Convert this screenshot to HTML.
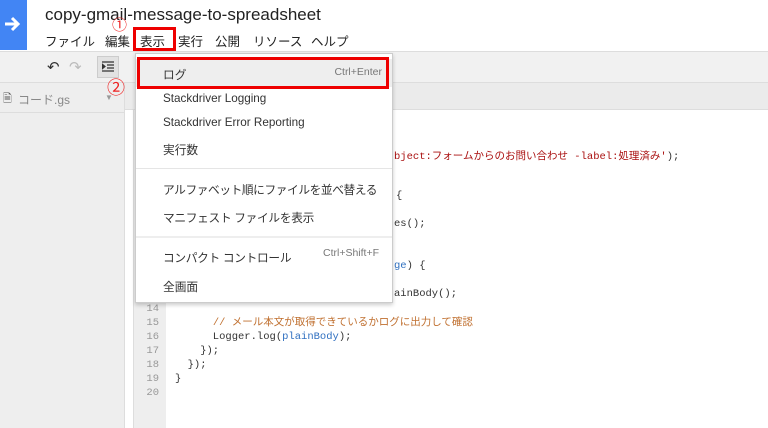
<!DOCTYPE html>
<html><head><meta charset="utf-8"><style>
*{margin:0;padding:0;box-sizing:border-box}
body{width:768px;height:428px;overflow:hidden;background:#fff;position:relative;font-family:"Liberation Sans","Noto Sans CJK JP",sans-serif}
.a{position:absolute}
.mono{font-family:"Liberation Mono","Noto Sans CJK JP",monospace;font-size:10.5px;white-space:pre}
.mi{position:absolute;left:27px;font-size:11.7px;color:#333;white-space:nowrap}
.sc{position:absolute;font-size:10.5px;color:#777}
</style></head><body>
<div class="a" style="left:0;top:0;width:27px;height:50px;background:#4285f4"></div>
<svg class="a" style="left:3px;top:14px" width="20" height="20" viewBox="0 0 20 20"><path d="M2 10h13M9 4l6 6-6 6" stroke="#fff" stroke-width="3" fill="none"/></svg>
<div class="a" style="left:45px;top:5px;font-size:17px;color:#222">copy-gmail-message-to-spreadsheet</div>
<div class="a" style="left:45px;top:31px;font-size:12.5px;color:#222;word-spacing:0">
<span style="position:absolute;left:0;white-space:nowrap">ファイル</span>
<span style="position:absolute;left:60px;white-space:nowrap">編集</span>
<span style="position:absolute;left:95px;white-space:nowrap">表示</span>
<span style="position:absolute;left:133px;white-space:nowrap">実行</span>
<span style="position:absolute;left:170px;white-space:nowrap">公開</span>
<span style="position:absolute;left:208px;white-space:nowrap">リソース</span>
<span style="position:absolute;left:266px;white-space:nowrap">ヘルプ</span>
</div>
<div class="a" style="left:112px;top:14px;font-size:15px;color:#e22">①</div>
<div class="a" style="left:133px;top:27px;width:43px;height:24px;border:3px solid #e00"></div>
<!-- toolbar -->
<div class="a" style="left:0;top:51px;width:768px;height:32px;background:#f1f1f1;border-top:1px solid #ddd;border-bottom:1px solid #ddd"></div>
<div class="a" style="left:0;top:83px;width:768px;height:27px;background:#ebebeb;border-bottom:1px solid #ddd"></div>
<div class="a" style="left:47px;top:58px;font-size:15px;color:#333">↶</div>
<div class="a" style="left:69px;top:58px;font-size:15px;color:#bbb">↷</div>
<div class="a" style="left:97px;top:56px;width:22px;height:22px;background:#e2e2e2;border:1px solid #ccc"></div>
<svg class="a" style="left:102px;top:61px" width="12" height="11"><path d="M0 1h12M5 4h7M5 7h7M0 10h12M0 3l3 2.5-3 2.5z" stroke="#333" stroke-width="1.2" fill="#333"/></svg>
<!-- sidebar -->
<div class="a" style="left:0;top:83px;width:125px;height:345px;background:#eee;border-right:1px solid #ddd"></div>
<div class="a" style="left:0;top:83px;width:125px;height:30px;border-bottom:1px solid #ddd"></div>
<div class="a" style="left:3px;top:90px;font-size:11px;color:#555">🗎</div>
<div class="a" style="left:18px;top:91px;font-size:12px;color:#888">コード.gs</div>
<div class="a" style="left:105px;top:93px;font-size:8px;color:#999">▼</div>
<div class="a" style="left:107px;top:74px;font-size:18px;color:#e22;z-index:5">②</div>
<!-- gutter -->
<div class="a" style="left:133px;top:110px;width:33px;height:318px;background:#eee;border-left:1px solid #ddd"></div>
<div class="a mono" style="left:133px;top:302px;width:26px;text-align:right;color:#999;line-height:14px">14
15
16
17
18
19
20</div>
<div class="a mono" style="left:175px;top:302px;line-height:14px;color:#333">
      <span style="color:#c07030">// メール本文が取得できているかログに出力して確認</span>
      Logger.log(<span style="color:#3070c0">plainBody</span>);
    });
  });
}</div>
<div class="a mono" style="left:394px;top:148px;color:#a11">bject:フォームからのお問い合わせ -label:処理済み'<span style="color:#333">);</span></div>
<div class="a mono" style="left:396px;top:190px;color:#333">{</div>
<div class="a mono" style="left:394px;top:218px;color:#333">es();</div>
<div class="a mono" style="left:394px;top:260px;color:#333"><span style="color:#3070c0">ge</span>) {</div>
<div class="a mono" style="left:394px;top:288px;color:#333">ainBody();</div>
<!-- menu -->
<div class="a" style="left:135px;top:53px;width:258px;height:250px;background:#fff;border:1px solid #ccc;box-shadow:0 2px 4px rgba(0,0,0,.2)">
<div class="a" style="left:0;top:5px;width:256px;height:28px;background:#eee"></div>
<div class="mi" style="top:12px">ログ</div><div class="sc" style="right:10px;top:12px">Ctrl+Enter</div>
<div class="mi" style="top:38px">Stackdriver Logging</div>
<div class="mi" style="top:62px">Stackdriver Error Reporting</div>
<div class="mi" style="top:87px">実行数</div>
<div class="a" style="left:0;top:114px;width:256px;height:1px;background:#e5e5e5"></div>
<div class="mi" style="top:127px;letter-spacing:-0.4px">アルファベット順にファイルを並べ替える</div>
<div class="mi" style="top:155px;letter-spacing:-0.3px">マニフェスト ファイルを表示</div>
<div class="a" style="left:0;top:182px;width:256px;height:2px;background:#eee"></div>
<div class="mi" style="top:195px;letter-spacing:-0.3px">コンパクト コントロール</div><div class="sc" style="left:187px;top:193px">Ctrl+Shift+F</div>
<div class="mi" style="top:224px">全画面</div>
</div>
<div class="a" style="left:137px;top:57px;width:252px;height:32px;border:3px solid #e00"></div>
</body></html>
